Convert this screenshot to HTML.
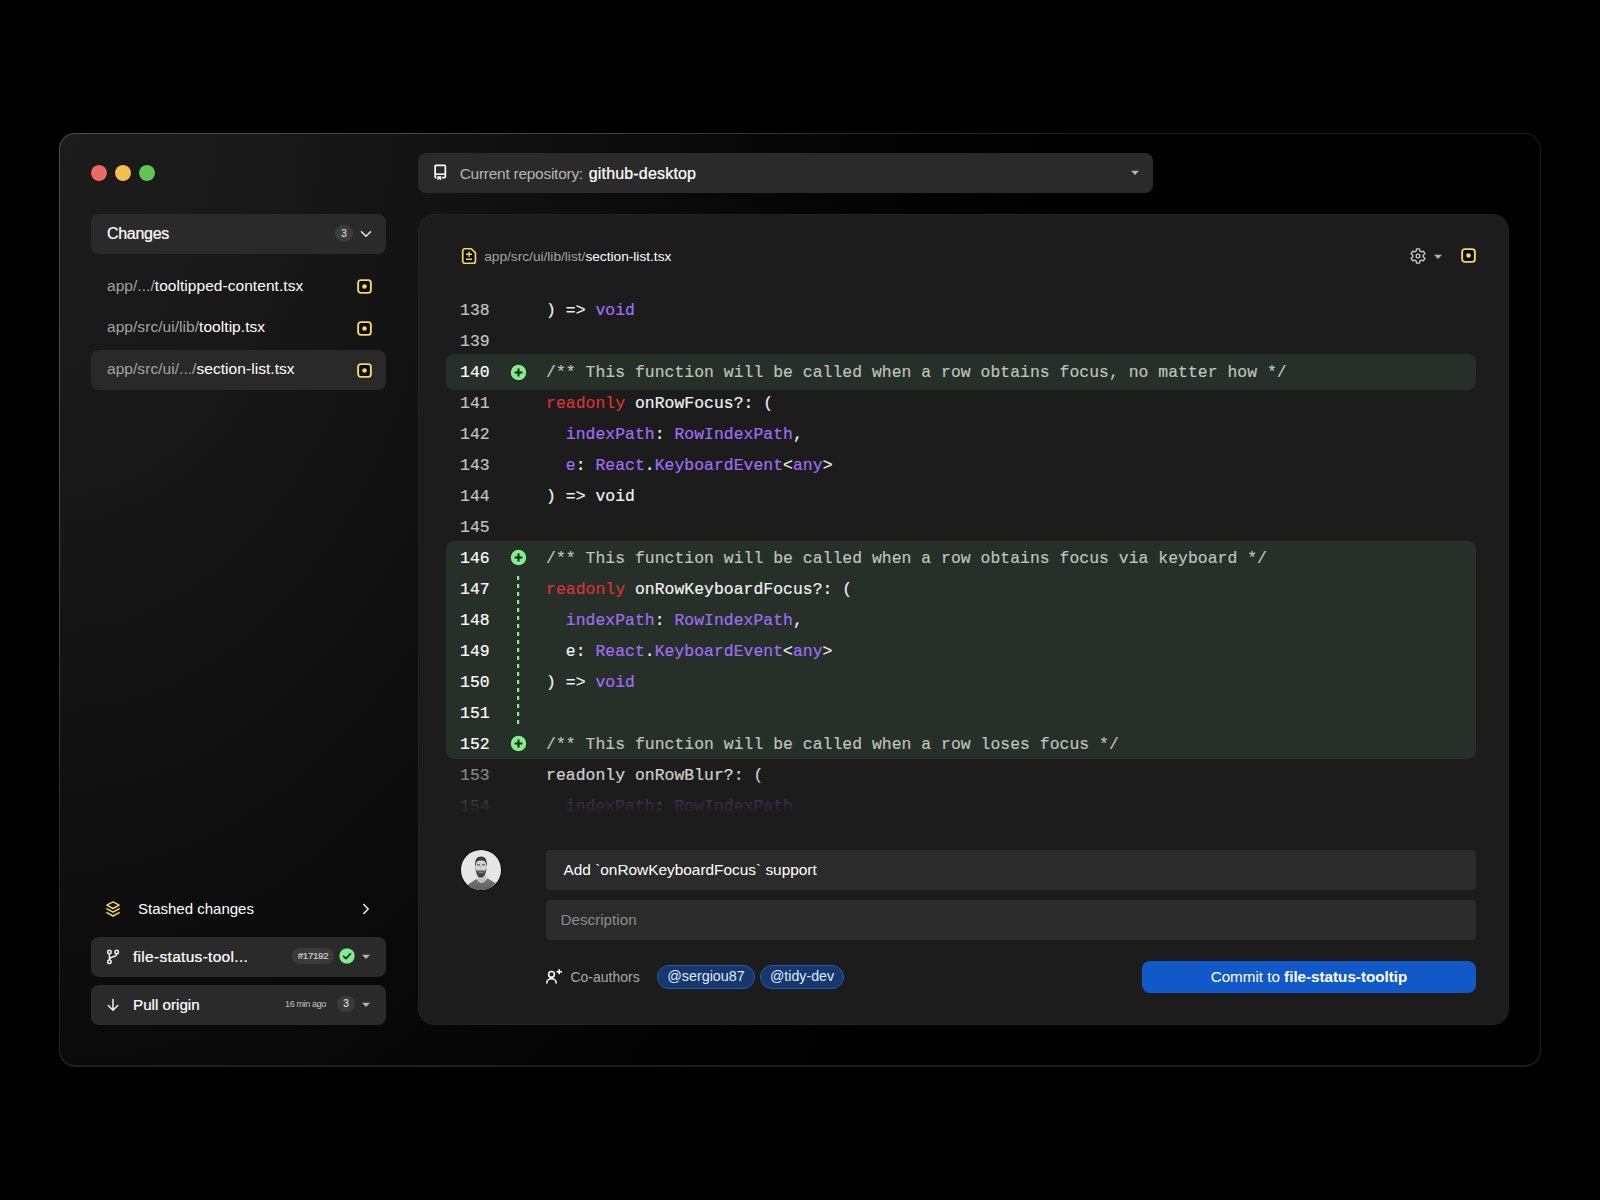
<!DOCTYPE html>
<html lang="en">
<head>
<meta charset="utf-8">
<title>GitHub Desktop</title>
<style>
html,body{margin:0;padding:0;background:#000;}
body{width:1600px;height:1200px;position:relative;overflow:hidden;font-family:"Liberation Sans",sans-serif;color:#fff;}
.abs{position:absolute;}
.win{position:absolute;left:59px;top:132.6px;width:1482px;height:934px;border-radius:16px;background:radial-gradient(ellipse 1200px 1100px at 0% 0%,#4c4c4c 0%,#484848 30%,#3a3a3a 50%,#2a2a2a 65%,#202020 85%,#1b1b1b 100%);}
.win i{position:absolute;left:1.2px;top:1.2px;right:1.2px;bottom:1.2px;border-radius:15px;
background:radial-gradient(ellipse 1000px 1500px at 0% 0%, #1c1c1c 0%, #181818 22%, #101010 45%, #090909 65%, #030303 85%, #010101 100%);}
.tl{position:absolute;width:16px;height:16px;border-radius:50%;top:165px;box-shadow:0 0 0 0.6px rgba(0,0,0,0.55);}
.box{position:absolute;background:#2a2a2a;border-radius:8px;}
.t{position:absolute;white-space:nowrap;line-height:20px;height:20px;}
.g{color:#a3a3a3;}
.m{-webkit-text-stroke:0.22px currentColor;}
.panel{position:absolute;left:418px;top:214px;width:1091px;height:810.6px;border-radius:16px;background:#1c1c1c;box-sizing:border-box;border:1px solid #222;}
.code{font-family:"Liberation Mono",monospace;font-size:16.4px;letter-spacing:0.04px;white-space:pre;position:absolute;line-height:31px;height:31px;-webkit-text-stroke:0.18px currentColor;}
.ln{left:460px;color:#c3c3c3;}
.lh{color:#fff;}
.cd{left:546px;color:#f2f2f2;}
.p{color:#a06ef8;}
.r{color:#dc3232;}
.c{color:#bfc4bd;}
.hl{position:absolute;left:446px;width:1030px;background:#262f28;border-radius:8px;}
.inp{position:absolute;left:546px;width:930px;height:40px;background:#2b2b2b;border-radius:4px;}
.pill{position:absolute;height:21.6px;top:965px;border-radius:12px;background:#17386f;border:1px solid #2559ae;}
</style>
</head>
<body>
<div class="win"><i></i></div>

<!-- traffic lights -->
<div class="tl" style="left:91px;background:#ec6a5e;"></div>
<div class="tl" style="left:115px;background:#f4bf4f;"></div>
<div class="tl" style="left:139px;background:#61c554;"></div>

<!-- sidebar: changes header -->
<div class="box" style="left:91px;top:214px;width:295px;height:40px;"></div>
<div class="t m" id="t_changes" style="left:107px;top:224px;font-size:16px;letter-spacing:-0.3px;">Changes</div>
<div class="abs" style="left:335.2px;top:225.4px;width:17.6px;height:16.7px;border-radius:9px;background:#3c3c3c;"></div>
<div class="t m" style="left:335px;top:223.6px;width:18px;text-align:center;font-size:10px;color:#d6d6d6;">3</div>
<svg class="abs" style="left:359px;top:227px;" width="14" height="14" viewBox="0 0 14 14"><path d="M2.5 4.8 L7 9.2 L11.5 4.8" fill="none" stroke="#e6e6e6" stroke-width="1.6" stroke-linecap="round" stroke-linejoin="round"/></svg>

<!-- file list -->
<div class="box" style="left:91px;top:350px;width:295px;height:40px;background:#292929;"></div>
<div class="t" id="t_f1" style="left:107px;top:276px;font-size:15.5px;letter-spacing:0.05px;"><span class="g">app/.../</span>tooltipped-content.tsx</div>
<div class="t" id="t_f2" style="left:107px;top:317px;font-size:15.5px;letter-spacing:0.05px;"><span class="g">app/src/ui/lib/</span>tooltip.tsx</div>
<div class="t" id="t_f3" style="left:107px;top:359px;font-size:15.5px;letter-spacing:0.05px;"><span class="g">app/src/ui/.../</span>section-list.tsx</div>
<svg class="abs" style="left:357.2px;top:278.5px;" width="15" height="15" viewBox="0 0 15 15"><rect x="1.15" y="1.15" width="12.7" height="12.7" rx="2.6" fill="#09090f" stroke="#f6d95e" stroke-width="1.9"/><circle cx="7.5" cy="7.5" r="2.3" fill="#f6d95e"/></svg>
<svg class="abs" style="left:357.2px;top:320.5px;" width="15" height="15" viewBox="0 0 15 15"><rect x="1.15" y="1.15" width="12.7" height="12.7" rx="2.6" fill="#09090f" stroke="#f6d95e" stroke-width="1.9"/><circle cx="7.5" cy="7.5" r="2.3" fill="#f6d95e"/></svg>
<svg class="abs" style="left:357.2px;top:362.5px;" width="15" height="15" viewBox="0 0 15 15"><rect x="1.15" y="1.15" width="12.7" height="12.7" rx="2.6" fill="#09090f" stroke="#f6d95e" stroke-width="1.9"/><circle cx="7.5" cy="7.5" r="2.3" fill="#f6d95e"/></svg>

<!-- stashed changes -->
<svg class="abs" style="left:104px;top:899px;" width="18" height="20" viewBox="0 0 18 20"><g fill="none" stroke="#f4d75c" stroke-width="1.5" stroke-linejoin="round" stroke-linecap="round"><path d="M9 2.9 L15.1 6.1 L9 9.5 L2.9 6.1 Z"/><path d="M2.9 9.9 L9 13.2 L15.1 9.9"/><path d="M2.9 13.6 L9 17 L15.1 13.6"/></g></svg>
<div class="t" id="t_stash" style="left:138px;top:899px;font-size:15px;">Stashed changes</div>
<svg class="abs" style="left:359px;top:902px;" width="14" height="14" viewBox="0 0 14 14"><path d="M4.8 2.5 L9.2 7 L4.8 11.5" fill="none" stroke="#e6e6e6" stroke-width="1.6" stroke-linecap="round" stroke-linejoin="round"/></svg>

<!-- branch button -->
<div class="box" style="left:91px;top:937px;width:295px;height:40px;"></div>
<svg class="abs" style="left:105px;top:948px;" width="16" height="18" viewBox="0 0 16 18"><g fill="none" stroke="#f0f0f0" stroke-width="1.5"><circle cx="4.4" cy="4.1" r="1.75"/><circle cx="4.4" cy="13.7" r="1.75"/><circle cx="11.7" cy="4.1" r="1.75"/><path d="M4.4 5.9 V11.9"/><path d="M11.7 5.9 C11.7 9.6 4.4 8 4.4 11.6"/></g></svg>
<div class="t m" id="t_branch" style="left:133px;top:947px;font-size:15.5px;letter-spacing:0.3px;">file-status-tool...</div>
<div class="abs" style="left:292px;top:948px;width:42px;height:16px;border-radius:8px;background:#3a3a3a;"></div>
<div class="t m" id="t_pr" style="left:292px;top:945.7px;width:42px;text-align:center;font-size:9.7px;letter-spacing:-0.3px;color:#cdcdcd;">#17192</div>
<svg class="abs" style="left:339px;top:948px;overflow:visible;" width="16" height="16" viewBox="0 0 16 16"><circle cx="8" cy="8" r="8.05" fill="#84ec8e" stroke="#0e1510" stroke-width="0.6"/><path d="M4.6 8.3 L7 10.6 L11.5 5.6" fill="none" stroke="#16301d" stroke-width="1.7" stroke-linecap="round" stroke-linejoin="round"/></svg>
<svg class="abs" style="left:361px;top:954px;" width="10" height="6" viewBox="0 0 10 6"><path d="M1 0.8 H9 L5 5 Z" fill="#b4b4b4"/></svg>

<!-- pull origin -->
<div class="box" style="left:91px;top:985px;width:295px;height:40px;"></div>
<svg class="abs" style="left:105px;top:997px;" width="16" height="16" viewBox="0 0 16 16"><path d="M8 2.5 V13 M3.3 8.5 L8 13.2 L12.7 8.5" fill="none" stroke="#f0f0f0" stroke-width="1.5" stroke-linecap="round" stroke-linejoin="round"/></svg>
<div class="t m" id="t_pull" style="left:133px;top:995px;font-size:15.2px;">Pull origin</div>
<div class="t" id="t_ago" style="left:285px;top:994px;font-size:9px;letter-spacing:-0.36px;color:#b6b6b6;-webkit-text-stroke:0.12px currentColor;">16 min ago</div>
<div class="abs" style="left:337px;top:995.8px;width:18px;height:16.4px;border-radius:9px;background:#3b3b3b;"></div>
<div class="t m" style="left:337px;top:993.6px;width:18px;text-align:center;font-size:10px;color:#dedede;">3</div>
<svg class="abs" style="left:361px;top:1002px;" width="10" height="6" viewBox="0 0 10 6"><path d="M1 0.8 H9 L5 5 Z" fill="#b4b4b4"/></svg>

<!-- repo bar -->
<div class="box" style="left:418px;top:153px;width:735px;height:40px;"></div>
<svg class="abs" style="left:433.6px;top:164.3px;" width="13" height="17" viewBox="0 0 13 17"><rect x="1.15" y="1.35" width="10.2" height="12.2" rx="0.8" fill="none" stroke="#fff" stroke-width="1.7"/><path d="M1.2 10.15 H11.3" stroke="#fff" stroke-width="1.5"/><rect x="2.5" y="12.2" width="5.4" height="2.6" fill="#2a2a2a"/><path d="M3.4 12.3 H7.2 V16.3 L5.3 15.1 L3.4 16.3 Z" fill="#fff"/></svg>
<div class="t" id="t_repo1" style="left:459.7px;top:164px;font-size:15.5px;letter-spacing:-0.27px;color:#b5b5b5;">Current repository:</div>
<div class="t m" id="t_repo2" style="left:588.7px;top:164px;font-size:16px;letter-spacing:0.18px;">github-desktop</div>
<svg class="abs" style="left:1130px;top:170px;" width="10" height="6" viewBox="0 0 10 6"><path d="M1 0.8 H9 L5 5 Z" fill="#b4b4b4"/></svg>

<!-- main panel -->
<div class="panel"></div>

<!-- file header -->
<svg class="abs" style="left:461px;top:247px;" width="16" height="18" viewBox="0 0 16 18"><path d="M3.75 1.75 H10.2 L14.4 5.9 V14.25 a2 2 0 0 1 -2 2 H3.75 a2 2 0 0 1 -2 -2 V3.75 a2 2 0 0 1 2 -2 Z" fill="#08080f" stroke="#f4d75c" stroke-width="1.7" stroke-linejoin="round"/><path d="M8 4.5 V10 M5 7.3 H11 M5 12.2 H11" stroke="#f4d75c" stroke-width="1.4" fill="none"/></svg>
<div class="t" id="t_path" style="left:484.2px;top:247px;font-size:13.7px;"><span class="g">app/src/ui/lib/list/</span>section-list.tsx</div>
<svg class="abs" style="left:1410px;top:248px;" width="16" height="16" viewBox="0 0 16 16"><g fill="none" stroke="#c8c8c8" stroke-width="1.35" stroke-linejoin="round"><circle cx="8" cy="8" r="1.85"/><path d="M6.26 2.94 L6.48 0.86 L9.52 0.86 L9.74 2.94 L11.51 3.96 L13.42 3.12 L14.94 5.74 L13.25 6.98 L13.25 9.02 L14.94 10.26 L13.42 12.88 L11.51 12.04 L9.74 13.06 L9.52 15.14 L6.48 15.14 L6.26 13.06 L4.49 12.04 L2.58 12.88 L1.06 10.26 L2.75 9.02 L2.75 6.98 L1.06 5.74 L2.58 3.12 L4.49 3.96 Z"/></g></svg>
<svg class="abs" style="left:1433px;top:254px;" width="10" height="6" viewBox="0 0 10 6"><path d="M1 0.8 H9 L5 5 Z" fill="#b4b4b4"/></svg>
<svg class="abs" style="left:1461.2px;top:248.2px;" width="15" height="15" viewBox="0 0 15 15"><rect x="1.15" y="1.15" width="12.7" height="12.7" rx="2.6" fill="#09090f" stroke="#f6d95e" stroke-width="1.9"/><circle cx="7.5" cy="7.5" r="2.3" fill="#f6d95e"/></svg>

<!-- code -->
<div class="hl" style="top:353.8px;height:36px;"></div>
<div class="hl" style="top:541px;height:218.4px;"></div>
<div id="code">
<div class="code ln" style="top:295px;">138</div><div class="code cd" style="top:295px;"><span>) =&gt; </span><span class="p">void</span></div>
<div class="code ln" style="top:326px;">139</div>
<div class="code ln lh" style="top:357px;">140</div><div class="code cd" style="top:357px;"><span class="c">/** This function will be called when a row obtains focus, no matter how */</span></div>
<div class="code ln" style="top:388px;">141</div><div class="code cd" style="top:388px;"><span class="r">readonly</span> onRowFocus?: (</div>
<div class="code ln" style="top:419px;">142</div><div class="code cd" style="top:419px;">  <span class="p">indexPath</span>: <span class="p">RowIndexPath</span>,</div>
<div class="code ln" style="top:450px;">143</div><div class="code cd" style="top:450px;">  <span class="p">e</span>: <span class="p">React</span>.<span class="p">KeyboardEvent</span>&lt;<span class="p">any</span>&gt;</div>
<div class="code ln" style="top:481px;">144</div><div class="code cd" style="top:481px;">) =&gt; void</div>
<div class="code ln" style="top:512px;">145</div>
<div class="code ln lh" style="top:543px;">146</div><div class="code cd" style="top:543px;"><span class="c">/** This function will be called when a row obtains focus via keyboard */</span></div>
<div class="code ln lh" style="top:574px;">147</div><div class="code cd" style="top:574px;"><span class="r">readonly</span> onRowKeyboardFocus?: (</div>
<div class="code ln lh" style="top:605px;">148</div><div class="code cd" style="top:605px;">  <span class="p">indexPath</span>: <span class="p">RowIndexPath</span>,</div>
<div class="code ln lh" style="top:636px;">149</div><div class="code cd" style="top:636px;">  e: <span class="p">React</span>.<span class="p">KeyboardEvent</span>&lt;<span class="p">any</span>&gt;</div>
<div class="code ln lh" style="top:667px;">150</div><div class="code cd" style="top:667px;">) =&gt; <span class="p">void</span></div>
<div class="code ln lh" style="top:698px;">151</div>
<div class="code ln lh" style="top:729px;">152</div><div class="code cd" style="top:729px;"><span class="c">/** This function will be called when a row loses focus */</span></div>
<div class="code ln" style="top:760px;color:#9a9a9a;">153</div><div class="code cd" style="top:760px;">readonly onRowBlur?: (</div>
<div class="code ln" style="top:791px;color:#9a9a9a;">154</div><div class="code cd" style="top:791px;">  <span class="p">indexPath</span>: <span class="p">RowIndexPath</span></div>
<svg class="abs" style="left:509.7px;top:363.6px;" width="17" height="17" viewBox="0 0 17 17"><circle cx="8.5" cy="8.5" r="8.2" fill="#84ec8e" stroke="#0d140e" stroke-width="0.8"/><path d="M8.5 4.6 V12.4 M4.6 8.5 H12.4" stroke="#0f2413" stroke-width="2"/></svg>
<svg class="abs" style="left:509.7px;top:548.7px;" width="17" height="17" viewBox="0 0 17 17"><circle cx="8.5" cy="8.5" r="8.2" fill="#84ec8e" stroke="#0d140e" stroke-width="0.8"/><path d="M8.5 4.6 V12.4 M4.6 8.5 H12.4" stroke="#0f2413" stroke-width="2"/></svg>
<svg class="abs" style="left:509.7px;top:734.8px;" width="17" height="17" viewBox="0 0 17 17"><circle cx="8.5" cy="8.5" r="8.2" fill="#84ec8e" stroke="#0d140e" stroke-width="0.8"/><path d="M8.5 4.6 V12.4 M4.6 8.5 H12.4" stroke="#0f2413" stroke-width="2"/></svg>
<svg class="abs" style="left:514px;top:575.6px;" width="8" height="148" viewBox="0 0 8 148"><line x1="4.1" y1="0" x2="4.1" y2="148" stroke="#84ec8e" stroke-width="2.2" stroke-dasharray="4 4"/></svg>
<div class="abs" style="left:446px;top:760px;width:1030px;height:62px;background:linear-gradient(to bottom, rgba(28,28,28,0.05) 0%, rgba(28,28,28,0.2) 30%, rgba(28,28,28,0.62) 55%, rgba(28,28,28,0.92) 80%, #1c1c1c 100%);"></div>
</div><!--endcode-->

<!-- avatar -->
<svg class="abs" style="left:460px;top:849px;" width="42" height="42" viewBox="-1 -1 42 42">
<defs><clipPath id="av"><circle cx="20" cy="20" r="20"/></clipPath>
<filter id="avb" x="-10%" y="-10%" width="120%" height="120%"><feGaussianBlur stdDeviation="0.45"/></filter>
<linearGradient id="brd" x1="0" y1="0" x2="0" y2="1"><stop offset="0" stop-color="#8a8a8a"/><stop offset="0.45" stop-color="#5a5a5a"/><stop offset="1" stop-color="#333"/></linearGradient>
<linearGradient id="shirt" x1="0" y1="0" x2="0" y2="1"><stop offset="0" stop-color="#747474"/><stop offset="1" stop-color="#5e5e5e"/></linearGradient></defs>
<circle cx="20" cy="20" r="20.7" fill="#060606"/>
<g clip-path="url(#av)">
<rect x="0" y="0" width="40" height="40" fill="#e6e6e6"/>
<g filter="url(#avb)">
<path d="M6.5 35 L15.6 28.7 L26.6 28.3 L35 33.6 L41 41 L-1 41 Z" fill="url(#shirt)"/>
<path d="M15.7 25 V29.2 Q20.4 36.8 26.3 28.8 V25 Z" fill="#d2d2d2"/>
<path d="M17 27 Q20 31 24.5 27.2 L24.5 30 Q20.5 34 17 30 Z" fill="#bdbdbd"/>
<ellipse cx="20" cy="17" rx="5.9" ry="10.2" fill="#d3d3d3"/>
<path d="M14.2 17 C13.6 9 16 6.4 20 6.4 C24 6.4 26.4 9 25.8 17 L25 14.5 C25 11.5 23.5 10.4 20 10.4 C16.5 10.4 15 11.5 15 14.5 Z" fill="#3a3a3a"/>
<path d="M14.3 17 C14.6 24 17 27.6 20 27.6 C23 27.6 25.4 24 25.7 17 C25.2 19.5 24.2 20.6 22.6 20.6 C21.4 20 18.6 20 17.4 20.6 C15.8 20.6 14.8 19.5 14.3 17 Z" fill="url(#brd)"/>
<path d="M18.2 22.6 Q20 21.9 21.8 22.6" stroke="#8c8c8c" stroke-width="0.9" fill="none"/>
<path d="M16.2 14.9 h2.7 M21.1 14.9 h2.7" stroke="#4a4a4a" stroke-width="1.1"/>
<path d="M20 15.5 V19" stroke="#b8b8b8" stroke-width="1"/>
</g>
</g>
</svg>
<svg class="abs" style="left:545px;top:968px;" width="18" height="16" viewBox="0 0 18 16"><g fill="none" stroke="#fff" stroke-width="1.55" stroke-linecap="round"><circle cx="6.5" cy="6.4" r="2.9"/><path d="M1.8 14.9 C1.8 9.4 11.2 9.4 11.2 14.9"/><path d="M14.25 1.3 V6.3 M11.5 3.75 H17" stroke-linecap="butt"/></g></svg>
<!-- commit area -->
<div class="inp" style="top:850px;"></div>
<div class="t" id="t_sum" style="left:563.5px;top:860px;font-size:15.4px;">Add `onRowKeyboardFocus` support</div>
<div class="inp" style="top:900px;"></div>
<div class="t" id="t_desc" style="left:560.4px;top:910px;font-size:15.25px;color:#8c8c8c;">Description</div>

<div class="t" id="t_co" style="left:570.4px;top:967px;font-size:14px;color:#a8a8a8;">Co-authors</div>
<div class="pill" style="left:657px;width:96px;"></div>
<div class="t" id="t_p1" style="left:657px;top:966px;width:98px;text-align:center;font-size:14.35px;color:#dfe9ff;">@sergiou87</div>
<div class="pill" style="left:760px;width:82px;"></div>
<div class="t" id="t_p2" style="left:760px;top:966px;width:84px;text-align:center;font-size:14.2px;color:#dfe9ff;">@tidy-dev</div>

<div class="abs" style="left:1142px;top:961px;width:334px;height:32px;border-radius:8px;background:#1158c8;"></div>
<div class="t" id="t_commit" style="left:1142px;top:967px;width:334px;text-align:center;font-size:15.2px;">Commit to <b>file-status-tooltip</b></div>

</body>
</html>
